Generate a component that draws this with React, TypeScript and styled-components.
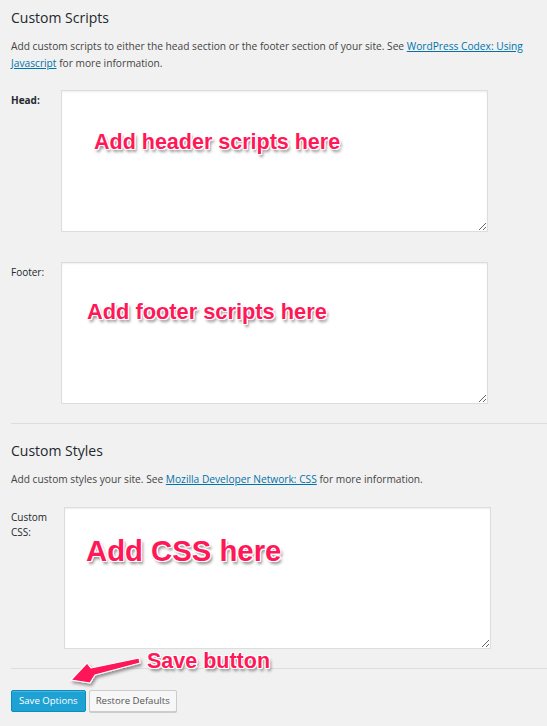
import styled, { createGlobalStyle } from 'styled-components'

const GlobalStyle = createGlobalStyle`
  html, body {
    margin: 0;
    padding: 0;
    background: #f1f1f1;
  }
  body {
    font-family: "Open Sans", "Noto Sans", sans-serif;
    color: #444;
  }
`

const Page = styled.div`
  padding: 8px 0 20px 11px;
`

const Heading = styled.h3<{ $gap?: number }>`
  margin: ${p => p.$gap ?? 0}px 0 0;
  font-size: 14px;
  line-height: 20px;
  font-weight: 400;
  color: #23282d;
`

const Description = styled.p<{ $gap?: number }>`
  margin: ${p => p.$gap ?? 9.5}px 0 0;
  max-width: 530px;
  font-size: 10.2px;
  line-height: 17px;
  color: #444;

  a {
    color: #0073aa;
    text-decoration: underline;
  }
`

const Fields = styled.div<{ $gap?: number }>`
  display: flex;
  flex-direction: column;
  gap: 30px;
  margin-top: ${p => p.$gap ?? 18}px;
`

const Row = styled.div<{ $labelWidth: number }>`
  display: grid;
  grid-template-columns: ${p => p.$labelWidth}px 427px;
  align-items: start;
`

const Label = styled.label<{ $bold?: boolean }>`
  padding-top: 3px;
  font-size: 10px;
  line-height: 15px;
  font-weight: ${p => (p.$bold ? 700 : 400)};
  color: #23282d;
  width: 40px;
`

const Box = styled.div`
  position: relative;
`

const Area = styled.textarea<{ $height: number }>`
  display: block;
  box-sizing: border-box;
  width: 100%;
  height: ${p => p.$height}px;
  margin: 0;
  border: 1px solid #ddd;
  background: #fff;
  box-shadow: inset 0 1px 2px rgba(0, 0, 0, 0.07);
  font-family: "Liberation Mono", monospace;
  font-size: 12px;
  outline: none;
`

const Callout = styled.span<{ $size: number; $top: number; $left: number }>`
  position: absolute;
  top: ${p => p.$top}px;
  left: ${p => p.$left}px;
  font-family: "Liberation Sans", Arial, sans-serif;
  font-weight: 700;
  font-size: ${p => p.$size}px;
  line-height: 1.2;
  white-space: nowrap;
  color: #ff1758;
  pointer-events: none;
  text-shadow:
    1px 0 0 #fff, -1px 0 0 #fff, 0 1px 0 #fff, 0 -1px 0 #fff,
    1px 1px 0 #fff, -1px -1px 0 #fff, 1px -1px 0 #fff, -1px 1px 0 #fff,
    2px 3px 3px rgba(0, 0, 0, 0.45);
`

const Divider = styled.hr`
  margin: 19px 0 0;
  border: 0;
  border-top: 1px solid #ddd;
`

const Actions = styled.div`
  position: relative;
  display: flow-root;
`

const Buttons = styled.div`
  display: flex;
  gap: 3px;
  margin-top: 21px;
`

const Button = styled.button<{ $primary?: boolean }>`
  box-sizing: border-box;
  height: 22px;
  padding: 0 ${p => (p.$primary ? 7 : 6)}px;
  border-radius: 2px;
  font-family: "Open Sans", "Noto Sans", sans-serif;
  font-size: 9.6px;
  line-height: 20px;
  cursor: pointer;
  border: 1px solid ${p => (p.$primary ? '#0a8ec0' : '#ccc')};
  background: ${p => (p.$primary ? '#1ea1d3' : '#f7f7f7')};
  color: ${p => (p.$primary ? '#fff' : '#555')};
  box-shadow: ${p =>
    p.$primary ? 'inset 0 1px 0 rgba(120, 200, 230, 0.5)' : '0 1px 0 #ccc'};
`

const Arrow = styled.svg`
  position: absolute;
  left: 49px;
  top: 1px;
  overflow: visible;
  pointer-events: none;
`

const App = () => (
  <>
    <GlobalStyle />
    <Page>
      <Heading>Custom Scripts</Heading>
      <Description>
        Add custom scripts to either the head section or the footer section of your site. See{' '}
        <a href="#codex">WordPress Codex: Using Javascript</a> for more information.
      </Description>

      <Fields>
        <Row $labelWidth={50}>
          <Label $bold>Head:</Label>
          <Box>
            <Area $height={142} />
            <Callout $size={21.5} $top={40} $left={33}>Add header scripts here</Callout>
          </Box>
        </Row>
        <Row $labelWidth={50}>
          <Label>Footer:</Label>
          <Box>
            <Area $height={142} />
            <Callout $size={21.8} $top={37} $left={26}>Add footer scripts here</Callout>
          </Box>
        </Row>
      </Fields>

      <Divider />

      <Heading $gap={17}>Custom Styles</Heading>
      <Description $gap={10.5}>
        Add custom styles your site. See <a href="#mdn">Mozilla Developer Network: CSS</a> for
        more information.
      </Description>

      <Fields $gap={19}>
        <Row $labelWidth={53}>
          <Label>Custom CSS:</Label>
          <Box>
            <Area $height={142} />
            <Callout $size={29.3} $top={26} $left={22}>Add CSS here</Callout>
          </Box>
        </Row>
      </Fields>

      <Actions>
        <Divider />
        <Callout $size={21.5} $top={0} $left={136}>Save button</Callout>
        <Arrow width="80" height="40" viewBox="0 0 80 40">
          <defs>
            <filter id="arrow-shadow" x="-20%" y="-20%" width="150%" height="160%">
              <feDropShadow dx="1.5" dy="2.5" stdDeviation="1.5" floodColor="#000" floodOpacity="0.4" />
            </filter>
          </defs>
          {/* pink pointer from the label down to the save button */}
          <polygon
            points="11,30 27,13 31,18 79,8 80,13 35,25 30,33"
            fill="#ff1758"
            stroke="#fff"
            strokeWidth="1.2"
            strokeLinejoin="round"
            filter="url(#arrow-shadow)"
          />
        </Arrow>
        <Buttons>
          <Button $primary>Save Options</Button>
          <Button>Restore Defaults</Button>
        </Buttons>
      </Actions>
    </Page>
  </>
)

export default App
